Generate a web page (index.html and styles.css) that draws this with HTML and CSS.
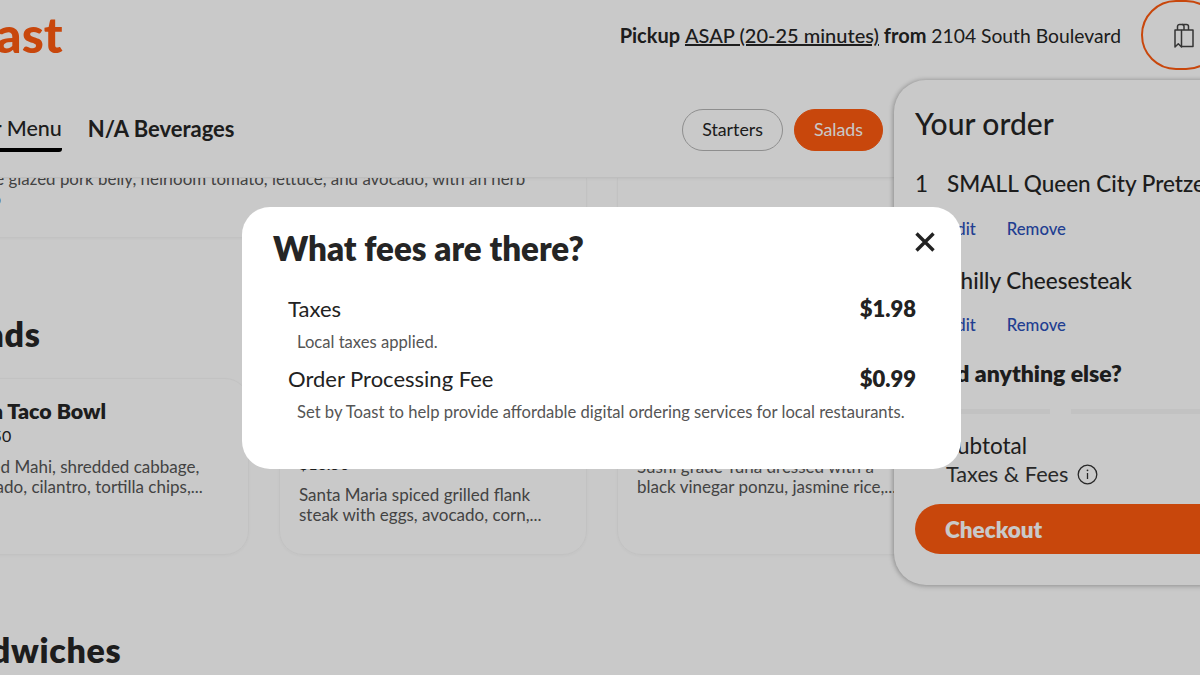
FILE: index.html
```html
<!DOCTYPE html>
<html lang="en">
<head>
<meta charset="utf-8">
<title>Toast order</title>
<link rel="stylesheet" href="styles.css">
</head>
<body>
<div class="page">
  <header class="header">
    <div class="logo">Toast</div>
    <div class="pickup"><b>Pickup</b> <a class="asap">ASAP (20-25 minutes)</a> <b>from</b> 2104 South Boulevard</div>
    <div class="bag">
      <svg width="20" height="25" viewBox="0 0 20 25" fill="none" stroke="currentColor" stroke-width="1.500" stroke-linejoin="round"><path d="M1 7h6.500v17l-3.200-3.200L1 24z"/><path d="M7.500 7H19v16.500H7.500"/><path d="M3.500 7V3.500a2 2 0 0 1 2-2H8a2 2 0 0 1 2 2V7"/><path d="M8 1.500h4.500a2 2 0 0 1 2 2V7"/></svg>
    </div>
  </header>
  <div class="body">
    <main class="menu">
      <nav class="nav">
        <div class="tabs">
          <span class="tab tab-active">Dinner Menu</span>
          <span class="tab">N/A Beverages</span>
        </div>
        <div class="pills">
          <span class="pill">Starters</span>
          <span class="pill pill-active">Salads</span>
        </div>
      </nav>
      <div class="scroll">
        <div class="top-row">
          <div class="top-card">
            <p class="desc-top">Apple glazed pork belly, heirloom tomato, lettuce, and avocado, with an herb<br>mayo</p>
          </div>
          <div class="top-card"></div>
        </div>
        <h2 class="section">Salads</h2>
        <div class="cards">
          <article class="card">
            <h3 class="card-title">Baja Taco Bowl</h3>
            <div class="price">$16.50</div>
            <p class="desc">Grilled Mahi, shredded cabbage,<br>avocado, cilantro, tortilla chips,...</p>
          </article>
          <article class="card">
            <h3 class="card-title">Santa Maria Steak<br>Salad Bowl</h3>
            <div class="price">$16.50</div>
            <p class="desc">Santa Maria spiced grilled flank<br>steak with eggs, avocado, corn,...</p>
          </article>
          <article class="card">
            <h3 class="card-title">Ahi Tuna Bowl</h3>
            <div class="price">$18.50</div>
            <p class="desc">Sushi grade Tuna dressed with a<br>black vinegar ponzu, jasmine rice,...</p>
          </article>
        </div>
        <h2 class="section section-2">Sandwiches</h2>
      </div>
    </main>
    <aside class="order">
      <h2 class="order-title">Your order</h2>
      <div class="line"><span class="qty">1</span><span class="item">SMALL Queen City Pretzel</span></div>
      <div class="links"><a>Edit</a><a>Remove</a></div>
      <div class="line line-2"><span class="qty">1</span><span class="item">Philly Cheesesteak</span></div>
      <div class="links"><a>Edit</a><a>Remove</a></div>
      <div class="add">Add anything else?</div>
      <div class="rule"><span></span><span></span></div>
      <div class="sum">Subtotal</div>
      <div class="sum sum-fees">Taxes &amp; Fees
        <svg width="21" height="21" viewBox="0 0 21 21" fill="none" stroke="currentColor"><circle cx="10.500" cy="10.500" r="9.300" stroke-width="1.300"/><path d="M10.500 9v6" stroke-width="1.300"/><circle cx="10.500" cy="6.300" r=".9" fill="currentColor" stroke="none"/></svg>
      </div>
      <div class="checkout">Checkout</div>
    </aside>
  </div>
</div>
<div class="overlay">
  <section class="modal">
    <div class="modal-head">
      <h1 class="modal-title">What fees are there?</h1>
      <svg class="close" width="20" height="20" viewBox="0 0 20 20" fill="none" stroke="#222" stroke-width="3.400"><path d="M1.500 1.500l17 17M18.500 1.500l-17 17"/></svg>
    </div>
    <div class="fee"><span>Taxes</span><b>$1.98</b></div>
    <p class="fee-note">Local taxes applied.</p>
    <div class="fee"><span>Order Processing Fee</span><b>$0.99</b></div>
    <p class="fee-note">Set by Toast to help provide affordable digital ordering services for local restaurants.</p>
  </section>
</div>
</body>
</html>
```
FILE: styles.css
```css
* { box-sizing: border-box; }
html, body { margin: 0; height: 100%; }
body {
  width: 1200px;
  height: 675px;
  overflow: hidden;
  background: #fff;
  color: #252525;
  font-family: Lato, "Liberation Sans", sans-serif;
}
h1, h2, h3, p { margin: 0; }

.page { width: 1200px; height: 675px; overflow: hidden; }

.header {
  height: 80px;
  display: flex;
  align-items: center;
}
.logo {
  margin-left: -57px;
  font-size: 50px;
  font-weight: 900;
  line-height: 60px;
  color: #fe5a10;
  flex: none;
  margin-top: -12px;
}
.pickup {
  margin-left: auto;
  font-size: 19.300px;
  white-space: nowrap;
  margin-top: -10px;
}
.pickup b, .asap { font-size: 20px; }
.asap { text-decoration: underline; font-weight: 500; }
.bag {
  flex: none;
  width: 80px;
  height: 70px;
  margin: -10px -21px 0 20px;
  border: 2.500px solid #fe5a10;
  border-radius: 35px;
  display: flex;
  align-items: center;
  padding-left: 31px;
  color: #444;
}

.body { display: flex; align-items: flex-start; }

.menu { flex: none; width: 894px; height: 595px; overflow: hidden; }
.nav {
  height: 98px;
  border-bottom: 1px solid #f2f2f2;
  box-shadow: 0 1px 3px rgba(0,0,0,.05);
  display: flex;
  align-items: flex-end;
  justify-content: space-between;
  position: relative;
  background: #fff;
  z-index: 1;
  padding: 0 11px 26px 0;
}
.tabs { display: flex; gap: 26px; margin-left: -63px; margin-bottom: -1px; }
.tab { font-size: 22px; font-weight: 700; padding-bottom: 6px; border-bottom: 4px solid transparent; white-space: nowrap; }
.tab-active { font-size: 21.500px; border-bottom-color: #000; border-radius: 0 0 3px 3px; font-weight: 500; }
.pills { display: flex; gap: 11px; }
.pill {
  height: 42px;
  padding: 0 19px 2px;
  border-radius: 21px;
  border: 1px solid #b5b5b5;
  font-size: 17.800px;
  display: flex;
  align-items: center;
}
.pill-active { background: #fe5a10; border-color: #fe5a10; color: #fff; }

.scroll { margin-left: -59px; }
.top-row { display: grid; grid-template-columns: 646px 308px; gap: 30px; height: 60px; }
.top-card {
  height: 60px;
  border: 1px solid #f7f7f7;
  border-top: 0;
  border-radius: 0 0 24px 24px;
  box-shadow: 0 1px 2px rgba(0,0,0,.03);
  padding: 0 19px;
  overflow: hidden;
}
.desc-top { font-size: 16.900px; line-height: 20px; color: #555; white-space: nowrap; margin-top: -9px; }

.section { font-size: 34px; font-weight: 800; letter-spacing: .7px; margin: 76px 0 0 -2px; line-height: 40px; }
.section-2 { margin: 75px 0 0 -8px; }

.cards { display: grid; grid-template-columns: repeat(3, 308px); gap: 30px; margin-top: 24px; }
.card {
  height: 177px;
  border: 1px solid #f7f7f7;
  border-radius: 24px;
  padding: 18px 19px;
  box-shadow: 0 1px 3px rgba(0,0,0,.03);
}
.card-title { font-size: 21.400px; font-weight: 800; line-height: 28px; white-space: nowrap; }
.price { font-size: 16px; line-height: 22px; }
.desc { font-size: 17px; line-height: 20px; color: #555; margin-top: 10px; white-space: nowrap; }

.order {
  flex: none;
  width: 340px;
  height: 505px;
  background: #fff;
  border-radius: 32px;
  box-shadow: -1px 0 4px rgba(0,0,0,.18), 0 1px 6px rgba(0,0,0,.18);
  padding: 25px 21px;
  position: relative;
  z-index: 2;
}
.order-title { font-size: 30px; font-weight: 500; line-height: 36px; }
.line { display: flex; gap: 19px; font-size: 22.500px; font-weight: 500; margin-top: 29px; line-height: 28px; white-space: nowrap; }
.line-2 { margin-top: 28px; }
.qty { font-weight: 400; }
.links { display: flex; gap: 31px; font-size: 16.700px; font-weight: 500; color: #2b4fb9; margin: 21px 0 0 32px; line-height: 20px; }
.line-2 + .links { margin-top: 20px; }
.add { font-size: 23px; font-weight: 800; margin: 24px 0 0 12px; line-height: 28px; white-space: nowrap; }
.rule { display: flex; gap: 21px; margin-top: 22px; }
.rule span { height: 5px; width: 135px; background: #f7f7f7; flex: none; }
.rule span + span { width: 170px; }
.sum { font-size: 22.500px; margin: 18px 0 0 30px; line-height: 28px; white-space: nowrap; }
.sum-fees { font-size: 21.700px; margin: 0 0 0 31px; display: flex; align-items: center; gap: 9px; color: #333; }
.checkout {
  height: 50px;
  width: 340px;
  margin-top: 16px;
  background: #fe5a10;
  border-radius: 25px;
  color: #fff;
  font-size: 22.500px;
  font-weight: 800;
  display: flex;
  align-items: center;
  padding-left: 30px;
}

.overlay {
  position: fixed;
  inset: 0;
  background: rgba(0,0,0,.21);
  z-index: 10;
}
.modal {
  position: absolute;
  left: 242px;
  top: 207px;
  width: 719px;
  height: 262px;
  background: #fff;
  border-radius: 28px;
  padding: 20px 45px 0 31px;
}
.modal-head { display: flex; justify-content: space-between; align-items: flex-start; height: 42px; margin-right: -19px; }
.modal-title { font-size: 33.200px; font-weight: 800; white-space: nowrap; line-height: 42px; }
.close { flex: none; margin-top: 5px; }
.fee { display: flex; justify-content: space-between; font-size: 22px; line-height: 28px; padding-left: 15px; color: #222; }
.modal-head + .fee { margin-top: 26px; }
.fee b { font-weight: 800; }
.fee-note { font-size: 16.600px; line-height: 20px; color: #555; padding-left: 24px; margin: 9px 0 13px; white-space: nowrap; }
```
